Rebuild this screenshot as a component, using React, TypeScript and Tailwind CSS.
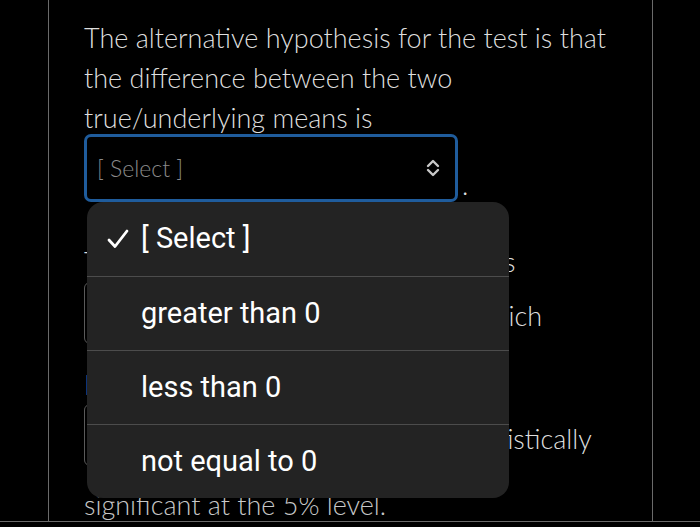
import React from 'react';

const options = ['[ Select ]', 'greater than 0', 'less than 0', 'not equal to 0'];

function UpDownIcon() {
  return (
    <svg width="16" height="20" viewBox="0 0 16 20" fill="none" stroke="#c8c8c8" strokeWidth="2.4" strokeLinecap="round" strokeLinejoin="round">
      <path d="M3 8 L8 3 L13 8" />
      <path d="M3 12 L8 17 L13 12" />
    </svg>
  );
}

function Check() {
  return (
    <svg width="22" height="20" viewBox="0 0 22 20" fill="none" stroke="#ffffff" strokeWidth="2.8" strokeLinecap="round" strokeLinejoin="round">
      <path d="M2 11 L8 17.5 L20 2" />
    </svg>
  );
}

function SelectBox({ active }: { active?: boolean }) {
  return (
    <div
      className={
        active
          ? 'w-[374px] h-[68px] shrink-0 rounded-[7px] border-[3px] border-[#1f5c9c] bg-black flex items-center justify-between pl-[10px] pr-[14px]'
          : 'w-[374px] h-[62px] shrink-0 rounded-[6px] border border-[#5a5a5a] bg-black'
      }
    >
      {active && (
        <>
          <span className="text-[23px] font-light text-[#8a8a8a]">[ Select ]</span>
          <UpDownIcon />
        </>
      )}
    </div>
  );
}

export default function App() {
  return (
    <div className="w-[700px] h-[527px] bg-black relative overflow-hidden" style={{ fontFamily: 'Lato, "Noto Sans", sans-serif' }}>
      <div className="h-[522px] border-b border-[#6a6a6a]">
        <div className="ml-[48px] w-[605px] h-full border-l border-r border-[#6a6a6a] pl-[35px] pt-[18px] text-[27px] font-light text-[#dedede]">
          <div className="leading-[40px]">
            The alternative hypothesis for the test is that
            <br />
            the difference between the two
            <br />
            true/underlying means is
          </div>
          <div className="flex items-end gap-[4px] mt-[-4px] h-[68px]">
            <SelectBox active />
            <span className="leading-[34px]">.</span>
          </div>
          <div className="leading-[40px] mt-[40px] h-[40px] whitespace-nowrap">The degrees of freedom of the test is</div>
          <div className="flex items-center gap-[15px] h-[62px]">
            <SelectBox />
            <span className="mt-[6px]">which</span>
          </div>
          <div className="leading-[40px] mt-[21px] h-[40px] text-[#cfcfcf]">Is the observed difference</div>
          <div className="flex items-center gap-[6px] h-[60px]">
            <SelectBox />
            <span className="mt-[8px]">statistically</span>
          </div>
          <div className="leading-[40px] mt-[20px] text-[#c8c8c8]">significant at the 5% level.</div>
        </div>
      </div>

      {/* open option list */}
      <div
        className="absolute left-[87px] top-[202px] w-[422px] h-[296px] rounded-[16px] bg-[#232323] overflow-hidden"
        style={{ fontFamily: 'Roboto, "Liberation Sans", sans-serif' }}
      >
        {options.map((opt, i) => (
          <div
            key={opt}
            className={
              'h-[74px] flex items-center text-[29px] text-white ' +
              (i > 0 ? 'border-t border-[#4c4c4c]' : '')
            }
          >
            <div className="w-[54px] flex justify-end pr-[12px]">{i === 0 && <Check />}</div>
            <span>{opt}</span>
          </div>
        ))}
      </div>
    </div>
  );
}
